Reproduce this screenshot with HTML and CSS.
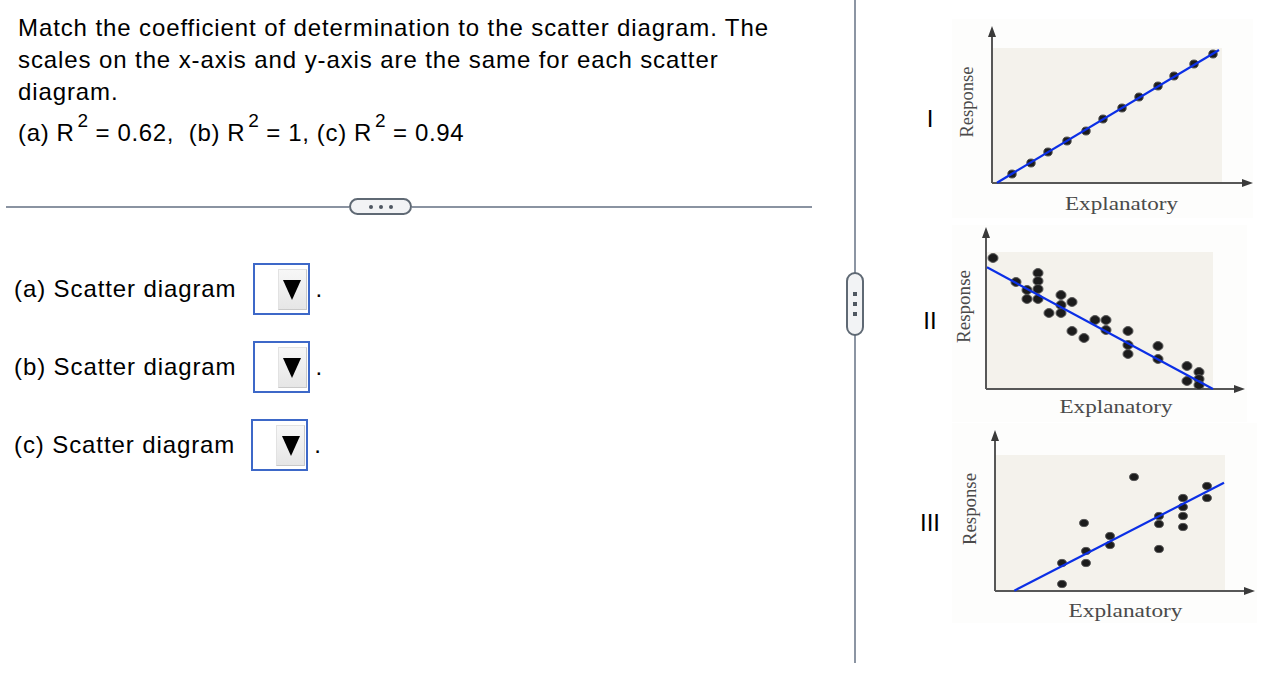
FILE: index.html
```html
<!DOCTYPE html>
<html lang="en">

<head>
    <meta charset="UTF-8">
    <meta name="viewport" content="width=device-width, initial-scale=1.0">
    <title>Scatter diagrams</title>
    <link rel="stylesheet" href="styles.css">
</head>

<body>
    <div class="page">
        <div class="question-pane">
            <div class="prompt">
                <p class="stem">Match the coefficient of determination to the scatter diagram. The scales on the x-axis and y-axis are the same for each scatter diagram.</p>
                <p class="values">(a) R<sup>2</sup> = 0.62,&nbsp; (b) R<sup>2</sup> = 1, (c) R<sup>2</sup> = 0.94</p>
            </div>

            <div class="divider">
                <span class="rule rule-left"></span>
                <span class="more"><i></i><i></i><i></i></span>
                <span class="rule"></span>
            </div>

            <div class="answers">
                <div class="answer">
                    <span>(a) Scatter diagram</span>
                    <span class="select"><span class="select-btn"><span class="caret"></span></span></span>
                    <span class="dot">.</span>
                </div>
                <div class="answer">
                    <span>(b) Scatter diagram</span>
                    <span class="select"><span class="select-btn"><span class="caret"></span></span></span>
                    <span class="dot">.</span>
                </div>
                <div class="answer">
                    <span>(c) Scatter diagram</span>
                    <span class="select"><span class="select-btn"><span class="caret"></span></span></span>
                    <span class="dot">.</span>
                </div>
            </div>

            <!-- splitter grip over the pane border -->
            <span class="grip"><i></i><i></i><i></i></span>
        </div>

        <div class="figure-pane">
            <div class="figure">
                <span class="roman">I</span>
                <svg class="plot" width="310" height="202" viewBox="950 18 310 202">
                    <defs>
                        <ellipse id="d1" rx="4.2" ry="4" class="pt" />
                    </defs>
                    <rect x="952" y="19" width="301" height="199" class="frame" />
                    <rect x="992" y="48" width="230" height="135" class="area" />
                    <path d="M992 183V34M992 183H1244" class="axis" />
                    <path d="M992 26l-4 11h8zM1253 183l-11-4v8z" class="arrow" />
                    <g class="pts">
                        <use href="#d1" x="1012" y="174" /><use href="#d1" x="1031" y="163" />
                        <use href="#d1" x="1048" y="152" /><use href="#d1" x="1067" y="141" />
                        <use href="#d1" x="1086" y="131" /><use href="#d1" x="1103" y="119" />
                        <use href="#d1" x="1122" y="108" /><use href="#d1" x="1139" y="97" />
                        <use href="#d1" x="1158" y="86" /><use href="#d1" x="1174" y="76" />
                        <use href="#d1" x="1194" y="64" /><use href="#d1" x="1213" y="54" />
                    </g>
                    <path d="M997 182.7L1219 50" class="fit" />
                    <text x="966.5" y="102" transform="rotate(-90 966.5 102)" textLength="71" lengthAdjust="spacingAndGlyphs" class="label">Response</text>
                    <text x="1121.5" y="203" textLength="113" lengthAdjust="spacingAndGlyphs" class="label">Explanatory</text>
                </svg>
            </div>

            <div class="figure">
                <span class="roman">II</span>
                <svg class="plot" width="310" height="202" viewBox="950 220 310 202">
                    <defs>
                        <ellipse id="d2" rx="5" ry="4.4" class="pt" />
                    </defs>
                    <rect x="952" y="225" width="295" height="198" class="frame" />
                    <rect x="986" y="252" width="227" height="137" class="area" />
                    <path d="M986 389V235M986 389H1237" class="axis" />
                    <path d="M986 227l-4 11h8zM1245 389l-11-4v8z" class="arrow" />
                    <g class="pts">
                        <use href="#d2" x="993" y="258" /><use href="#d2" x="1016" y="282" />
                        <use href="#d2" x="1027" y="290" /><use href="#d2" x="1027" y="299" />
                        <use href="#d2" x="1038" y="273" /><use href="#d2" x="1038" y="281" />
                        <use href="#d2" x="1038" y="289" /><use href="#d2" x="1038" y="299" />
                        <use href="#d2" x="1049" y="313" /><use href="#d2" x="1061" y="295" />
                        <use href="#d2" x="1061" y="305" /><use href="#d2" x="1061" y="313" />
                        <use href="#d2" x="1072" y="302" /><use href="#d2" x="1072" y="331" />
                        <use href="#d2" x="1084" y="338" /><use href="#d2" x="1095" y="320" />
                        <use href="#d2" x="1106" y="320" /><use href="#d2" x="1106" y="330" />
                        <use href="#d2" x="1128" y="331" /><use href="#d2" x="1128" y="345" />
                        <use href="#d2" x="1128" y="354" /><use href="#d2" x="1158" y="346" />
                        <use href="#d2" x="1158" y="359" /><use href="#d2" x="1187" y="366" />
                        <use href="#d2" x="1187" y="381" /><use href="#d2" x="1199" y="372" />
                        <use href="#d2" x="1199" y="379" /><use href="#d2" x="1199" y="385" />
                    </g>
                    <path d="M987 267.3L1213 389" class="fit" />
                    <text x="963.5" y="306.5" transform="rotate(-90 963.5 306.5)" textLength="73" lengthAdjust="spacingAndGlyphs" class="label">Response</text>
                    <text x="1116" y="406.5" textLength="113" lengthAdjust="spacingAndGlyphs" class="label">Explanatory</text>
                </svg>
            </div>

            <div class="figure">
                <span class="roman">III</span>
                <svg class="plot" width="310" height="202" viewBox="950 422 310 202">
                    <defs>
                        <ellipse id="d3" rx="4.4" ry="3.6" class="pt" />
                    </defs>
                    <rect x="952" y="423" width="305" height="200" class="frame" />
                    <rect x="995" y="455" width="230" height="136" class="area" />
                    <path d="M995 591V438M995 591H1247" class="axis" />
                    <path d="M995 430l-4 11h8zM1255 591l-11-4v8z" class="arrow" />
                    <g class="pts">
                        <use href="#d3" x="1062" y="563" /><use href="#d3" x="1062" y="584" />
                        <use href="#d3" x="1084" y="523" /><use href="#d3" x="1086" y="551" />
                        <use href="#d3" x="1086" y="563" /><use href="#d3" x="1110" y="536" />
                        <use href="#d3" x="1110" y="545" /><use href="#d3" x="1134" y="477" />
                        <use href="#d3" x="1159" y="516" /><use href="#d3" x="1159" y="524" />
                        <use href="#d3" x="1159" y="549" /><use href="#d3" x="1183" y="498" />
                        <use href="#d3" x="1183" y="507" /><use href="#d3" x="1183" y="516" />
                        <use href="#d3" x="1183" y="527" /><use href="#d3" x="1207" y="486" />
                        <use href="#d3" x="1207" y="498" />
                    </g>
                    <path d="M1014.3 590.7L1224 482.7" class="fit" />
                    <text x="969.5" y="509" transform="rotate(-90 969.5 509)" textLength="72" lengthAdjust="spacingAndGlyphs" class="label">Response</text>
                    <text x="1125.5" y="610.5" textLength="114" lengthAdjust="spacingAndGlyphs" class="label">Explanatory</text>
                </svg>
            </div>
        </div>
    </div>
</body>

</html>
```

FILE: styles.css
```css
* {
    box-sizing: border-box;
}

body {
    margin: 0;
    font-family: 'Liberation Sans', Arial, Helvetica, sans-serif;
    color: #000;
    background-color: #fff;
}

.page {
    display: flex;
    height: 663px;
}

/* left side: question and answers */
.question-pane {
    position: relative;
    width: 856px;
    padding: 12px 42px 0 6px;
    border-right: 2px solid #8c95a3;
}

.prompt {
    padding-left: 12px;
    font-size: 24px;
    letter-spacing: 0.9px;
    line-height: 32px;
}

.prompt p {
    margin: 0;
}

.prompt .values {
    margin-top: 9px;
    letter-spacing: 0.65px;
}

.values sup {
    font-size: 19px;
    line-height: 0;
    vertical-align: 14px;
    margin-left: 3px;
    letter-spacing: 0;
}

.divider {
    display: flex;
    align-items: center;
    margin-top: 49px;
}

.rule {
    flex: 1;
    height: 2px;
    background-color: #8a93a1;
}

.rule-left {
    flex: 0 0 343px;
}

.more {
    display: flex;
    justify-content: center;
    align-items: center;
    gap: 6px;
    width: 63px;
    height: 17px;
    border: 2px solid #5f6974;
    border-radius: 9px;
    background-color: #f2f3f5;
}

.more i {
    width: 4px;
    height: 4px;
    border-radius: 50%;
    background-color: #4f5761;
}

.answers {
    display: flex;
    flex-direction: column;
    gap: 26px;
    margin-top: 48px;
    padding-left: 8px;
    font-size: 24px;
    letter-spacing: 0.9px;
}

.answer {
    display: flex;
    align-items: center;
    height: 52px;
}

.select {
    display: flex;
    justify-content: flex-end;
    align-items: center;
    width: 57px;
    height: 52px;
    margin-left: 16px;
    padding: 1px 1px 0 0;
    border: 2px solid #3d68c8;
}

.select-btn {
    display: flex;
    justify-content: center;
    align-items: center;
    width: 29px;
    height: 41px;
    border: 1px solid #c9c9c9;
    border-top-color: #e2e2e2;
    border-left-color: #e2e2e2;
    background-image: linear-gradient(#f7f7f7, #e6e6e6);
}

.caret {
    width: 0;
    height: 0;
    border-left: 9px solid transparent;
    border-right: 9px solid transparent;
    border-top: 20px solid #000;
}

.answer .dot {
    margin-left: 6px;
}

.grip {
    position: absolute;
    top: 272px;
    right: -10px;
    display: flex;
    flex-direction: column;
    justify-content: center;
    align-items: center;
    gap: 6px;
    width: 18px;
    height: 64px;
    border: 2px solid #5f6974;
    border-radius: 9px;
    background-color: #f2f3f5;
}

.grip i {
    width: 4px;
    height: 4px;
    background-color: #4f5761;
}

/* right side: the three scatter diagrams */
.figure-pane {
    padding: 18px 0 0 54px;
}

.figure {
    display: flex;
    align-items: center;
    height: 202px;
}

.roman {
    width: 40px;
    font-size: 24px;
    text-align: center;
}

.plot {
    display: block;
}

.frame {
    fill: #fdfdfc;
}

.area {
    fill: #f4f2ec;
}

.axis {
    fill: none;
    stroke: #575757;
    stroke-width: 2;
}

.arrow {
    fill: #3a3a3a;
}

.pt {
    fill: #1c1c1c;
    stroke: #555;
    stroke-width: 1;
}

.fit {
    stroke: #0b2fe6;
    stroke-width: 2.2;
}

.label {
    font-family: 'Liberation Serif', 'Times New Roman', serif;
    font-size: 19px;
    fill: #4a4a4a;
    text-anchor: middle;
    dominant-baseline: central;
}
```
